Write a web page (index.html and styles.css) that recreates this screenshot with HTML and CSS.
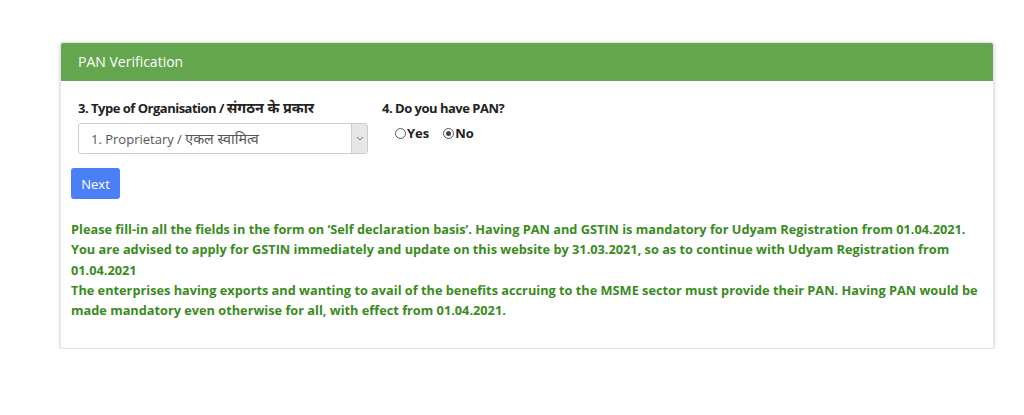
FILE: index.html
```html
<!DOCTYPE html>
<html>
<head>
<meta charset="utf-8">
<link rel="stylesheet" href="styles.css">
</head>
<body>
<div class="panel">
  <div class="panel-heading">PAN Verification</div>
  <div class="panel-body">
    <div class="row">
      <div class="col col-org">
        <label class="lbl">3. Type of Organisation / <span class="hi">संगठन के प्रकार</span></label>
        <div class="select">
          <span class="select-text">1. Proprietary / <span class="hi">एकल स्वामित्व</span></span>
          <span class="select-btn"><svg width="8" height="5" viewBox="0 0 8 5"><path d="M1 1l3 3 3-3" fill="none" stroke="#777" stroke-width="1"/></svg></span>
        </div>
      </div>
      <div class="col col-pan">
        <label class="lbl">4. Do you have PAN?</label>
        <div class="radios">
          <span class="radio"><span class="dot"></span>Yes</span>
          <span class="radio"><span class="dot checked"></span>No</span>
        </div>
      </div>
    </div>
    <button class="btn">Next</button>
    <p class="note">Please fill-in all the fields in the form on ‘Self declaration basis’. Having PAN and GSTIN is mandatory for Udyam Registration from 01.04.2021.<br>You are advised to apply for GSTIN immediately and update on this website by 31.03.2021, so as to continue with Udyam Registration from 01.04.2021<br>The enterprises having exports and wanting to avail of the benefits accruing to the MSME sector must provide their PAN. Having PAN would be made mandatory even otherwise for all, with effect from 01.04.2021.</p>
  </div>
</div>
</body>
</html>
```
FILE: styles.css
```css
* { box-sizing: border-box; }
body {
  margin: 0;
  background: #fff;
  font-family: "Open Sans", "Noto Sans", "Noto Sans CJK SC", sans-serif;
  padding: 42px 30px 0 60px;
}
.panel {
  width: 934px;
  background: #fff;
  border: 1px solid #e3e3e3;
  border-radius: 3px;
  box-shadow: 0 1px 4px rgba(0,0,0,0.18);
  height: 307px;
}
.panel-heading {
  background: #63a64e;
  color: #fff;
  height: 38px;
  padding: 0 17px 2px;
  display: flex;
  align-items: center;
  font-size: 14px;
  border-radius: 2px 2px 0 0;
}
.panel-body {
  padding: 18px 10px 0 10px;
}
.row { display: flex; }
.col-org { width: 304px; padding-left: 7px; }
.col-pan { padding-left: 7px; }
.lbl {
  display: block;
  font-weight: 700;
  font-size: 13px;
  letter-spacing: -0.5px;
  color: #222;
  height: 24px;
  line-height: 18px;
  white-space: nowrap;
}
.hi { font-size: 1.1em; letter-spacing: 0; }
.select {
  width: 290px;
  height: 31px;
  border: 1px solid #ccc;
  border-radius: 3px;
  display: flex;
  align-items: center;
  justify-content: space-between;
  font-size: 13px;
  color: #555;
  padding-left: 12px;
  overflow: hidden;
}
.select-btn {
  width: 16px;
  height: 29px;
  background: #e6e6e6;
  border-left: 1px solid #ccc;
  display: flex;
  align-items: center;
  justify-content: center;
}
.radios {
  display: flex;
  gap: 14px;
  padding-left: 13px;
  padding-top: 1px;
  font-size: 13px;
  font-weight: 700;
  color: #222;
}
.radio { display: flex; align-items: center; }
.dot {
  width: 11px;
  height: 11px;
  border: 1px solid #555;
  border-radius: 50%;
  margin-right: 1px;
  display: inline-block;
  position: relative;
}
.dot.checked::after {
  content: "";
  position: absolute;
  left: 2px; top: 2px;
  width: 5px; height: 5px;
  border-radius: 50%;
  background: #444;
}
.btn {
  margin-top: 14px;
  background: #4a7ff5;
  color: #fff;
  border: none;
  border-radius: 3px;
  width: 49px;
  height: 31px;
  font-family: inherit;
  font-size: 13px;
  padding: 0;
}
.note {
  margin: 20px 0 0 0;
  color: #3a8b1d;
  font-weight: 700;
  font-size: 12.75px;
  line-height: 20.3px;
}
```
